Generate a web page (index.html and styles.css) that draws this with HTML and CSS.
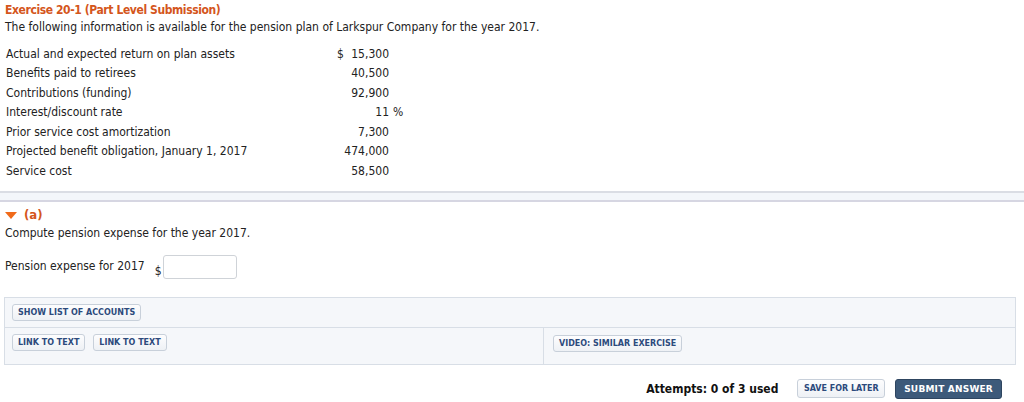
FILE: index.html
```html
<!DOCTYPE html>
<html>
<head>
<meta charset="utf-8">
<link rel="stylesheet" href="styles.css">
</head>
<body>
<div class="page">
  <h1 class="title">Exercise 20-1 (Part Level Submission)</h1>
  <p class="intro">The following information is available for the pension plan of Larkspur Company for the year 2017.</p>
  <div class="data">
    <div class="label">Actual and expected return on plan assets</div><div class="value"><span class="cur">$</span> 15,300</div><div class="unit"></div>
    <div class="label">Benefits paid to retirees</div><div class="value">40,500</div><div class="unit"></div>
    <div class="label">Contributions (funding)</div><div class="value">92,900</div><div class="unit"></div>
    <div class="label">Interest/discount rate</div><div class="value">11</div><div class="unit">%</div>
    <div class="label">Prior service cost amortization</div><div class="value">7,300</div><div class="unit"></div>
    <div class="label">Projected benefit obligation, January 1, 2017</div><div class="value">474,000</div><div class="unit"></div>
    <div class="label">Service cost</div><div class="value">58,500</div><div class="unit"></div>
  </div>
</div>
<div class="sep"></div>
<div class="page">
  <div class="part-head"><span class="tri"></span><span>(a)</span></div>
  <p class="question">Compute pension expense for the year 2017.</p>
  <div class="answer-row">
    <span class="answer-label">Pension expense for 2017</span>
    <span class="dollar">$</span>
    <span class="field"></span>
  </div>
</div>
<div class="panel">
  <div class="panel-row">
    <span class="btn">SHOW LIST OF ACCOUNTS</span>
  </div>
  <div class="panel-row split">
    <div class="cell left">
      <span class="btn">LINK TO TEXT</span>
      <span class="btn">LINK TO TEXT</span>
    </div>
    <div class="cell right">
      <span class="btn">VIDEO: SIMILAR EXERCISE</span>
    </div>
  </div>
</div>
<div class="footer">
  <span class="attempts">Attempts: 0 of 3 used</span>
  <span class="btn save">SAVE FOR LATER</span>
  <span class="btn submit">SUBMIT ANSWER</span>
</div>
</body>
</html>
```
FILE: styles.css
```css
html, body {
  margin: 0;
  padding: 0;
  background: #fff;
}
body {
  font-family: "DejaVu Sans Condensed", "DejaVu Sans", sans-serif;
  font-size: 12px;
  color: #222;
  width: 1024px;
}
.page {
  padding: 0 5px;
}
.title {
  margin: 0;
  padding-top: 2px;
  font-size: 12px;
  letter-spacing: -0.4px;
  line-height: 16px;
  font-weight: bold;
  color: #d4561c;
}
.intro {
  margin: 0;
  line-height: 16px;
  padding-top: 1px;
}
.data {
  display: grid;
  grid-template-columns: 331px 52px 20px;
  margin-top: 9px;
  padding-left: 1px;
  grid-auto-rows: 19.5px;
  align-items: center;
}
.value {
  text-align: right;
  white-space: nowrap;
}
.value .cur {
  float: left;
}
.unit {
  padding-left: 4px;
}
.sep {
  margin-top: 10px;
  height: 7px;
  background: #f3f6fa;
  border-top: 2px solid #dadde4;
  border-bottom: 2px solid #d6d6e2;
}
.part-head {
  margin-top: 5px;
  display: flex;
  align-items: center;
  gap: 7px;
  color: #d4561c;
  font-weight: bold;
  font-size: 13px;
  line-height: 16px;
}
.tri {
  width: 0;
  height: 0;
  border-left: 6px solid transparent;
  border-right: 6px solid transparent;
  border-top: 7px solid #f06a1a;
  margin-top: 2px;
}
.question {
  margin: 2px 0 0;
  line-height: 16px;
}
.answer-row {
  display: flex;
  align-items: flex-start;
  margin-top: 13px;
  height: 24px;
}
.answer-label {
  margin-top: 4px;
  line-height: 16px;
}
.dollar {
  margin: 10px 1px 0 10px;
  line-height: 14px;
  font-size: 12px;
}
.field {
  width: 72px;
  height: 22px;
  margin-top: 1px;
  border: 1px solid #cfd3d8;
  border-radius: 3px;
  background: #fff;
}
.panel {
  margin: 19px 8px 0 4px;
  border: 1px solid #d8dee6;
  background: #f5f7fa;
}
.panel-row {
  padding: 6px 7px 6px 7px;
}
.panel-row + .panel-row {
  border-top: 1px solid #d8dee6;
}
.panel-row.split {
  display: flex;
  padding: 0;
  height: 36px;
}
.cell {
  padding: 6px 7px;
}
.cell.left {
  width: 524px;
  display: flex;
  gap: 8px;
  align-items: flex-start;
  border-right: 1px solid #d8dee6;
}
.cell.right {
  padding: 7px 9px;
}
.btn {
  display: inline-block;
  font-family: "DejaVu Sans", sans-serif;
  font-size: 8px;
  font-weight: bold;
  color: #2c4a7c;
  line-height: 15px;
  padding: 0 5px;
  border: 1px solid #c8d0da;
  border-radius: 3px;
  background: linear-gradient(#fdfdfe, #eef1f5);
  white-space: nowrap;
}
.footer {
  display: flex;
  justify-content: flex-end;
  align-items: center;
  gap: 10px;
  padding: 14px 22px 0 0;
}
.attempts {
  font-size: 12px;
  font-weight: bold;
  color: #111;
  margin-right: 9px;
}
.btn.save {
  line-height: 17px;
  padding: 0 5.5px;
}
.btn.submit {
  font-size: 9px;
  letter-spacing: 0.2px;
  line-height: 18px;
  padding: 0 8px;
  background: #3d5a7a;
  border-color: #2e4560;
  color: #fff;
}
```
